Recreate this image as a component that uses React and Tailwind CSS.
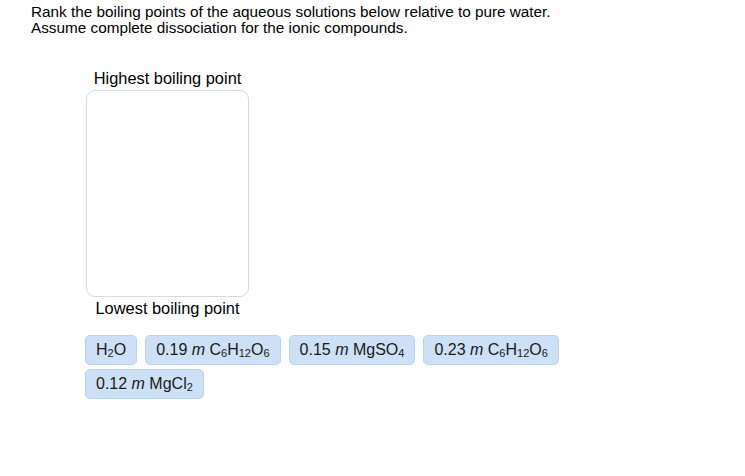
export default function App() {
  const chip =
    "h-[30px] px-[10px] flex items-center rounded-[5px] bg-[#cde0f5] border border-[#b9d1ec] text-[16px] text-[#1a1a1a] whitespace-nowrap";
  const sub = "text-[11px] relative top-[3px] leading-none";
  return (
    <div className="w-[745px] h-[476px] bg-white font-['Liberation_Sans',Arial,sans-serif] text-black">
      <div className="pl-[31px] pt-[4px] text-[15.3px] leading-[16px]">
        <div>Rank the boiling points of the aqueous solutions below relative to pure water.</div>
        <div>Assume complete dissociation for the ionic compounds.</div>
      </div>
      <div className="ml-[86px] mt-[33px] w-[163px] flex flex-col items-center text-[16.4px] leading-[18px]">
        <div>Highest boiling point</div>
        <div className="mt-[3px] w-[163px] h-[207px] rounded-[9px] border border-[#d3dbe4] bg-white"></div>
        <div className="mt-[2px]">Lowest boiling point</div>
      </div>
      <div className="ml-[85px] mt-[18px] w-[480px] flex flex-wrap gap-x-[8px] gap-y-[4px]">
        <div className={chip}>
          H<span className={sub}>2</span>O
        </div>
        <div className={chip}>
          0.19&nbsp;<i>m</i>&nbsp;C<span className={sub}>6</span>H<span className={sub}>12</span>O<span className={sub}>6</span>
        </div>
        <div className={chip}>
          0.15&nbsp;<i>m</i>&nbsp;MgSO<span className={sub}>4</span>
        </div>
        <div className={chip}>
          0.23&nbsp;<i>m</i>&nbsp;C<span className={sub}>6</span>H<span className={sub}>12</span>O<span className={sub}>6</span>
        </div>
        <div className={chip}>
          0.12&nbsp;<i>m</i>&nbsp;MgCl<span className={sub}>2</span>
        </div>
      </div>
    </div>
  );
}
